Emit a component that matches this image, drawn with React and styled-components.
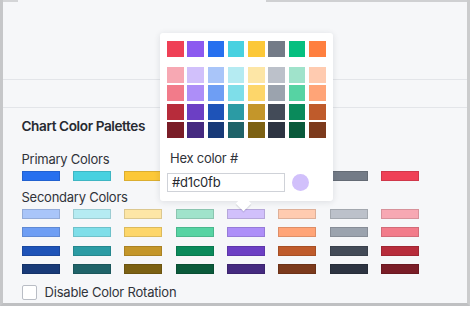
import React from 'react';
import styled, {createGlobalStyle} from 'styled-components';

const GlobalStyle = createGlobalStyle`
body {
	margin: 0;
	background: #fff;
	font-family: Inter, "Noto Sans", sans-serif;
	color: #2a2d34;
}
`;

const primary = ['#ef4056', '#8c5af0', '#2770ef', '#48d1e0', '#fcc838', '#737b87', '#06bf7f', '#ff7f3f'];

const shades = [
	['#f7a8b3', '#d1c0fb', '#a9c5f9', '#b5ebf2', '#fde6a6', '#bcc1ca', '#a0e3cb', '#ffcbb0'],
	['#f27b8a', '#ad8ef8', '#6e9ef4', '#7edee9', '#fdd66a', '#9ba3ae', '#56d3a3', '#ffa477'],
	['#b72c3b', '#6c3fc4', '#1e53b8', '#2b9ba4', '#c4962a', '#434b58', '#0a8a5b', '#bf5b2b'],
	['#7a1d27', '#452a80', '#183a78', '#1f6369', '#7c6113', '#2d3442', '#0a5a3b', '#7c3a1c'],
];

// chart bars run in a different order than the picker
const barOrder = [2, 3, 4, 6, 1, 7, 5, 0];
const primaryBars = barOrder.map(i => primary[i]);
const secondaryBars = shades.map(row => barOrder.map(i => row[i]));

const Frame = styled.div`
position: relative;
width: 464px;
height: 303px;
display: flex;
flex-direction: column;
background:
	linear-gradient(to right, #d4d5d7 0 15px, transparent 15px 263px, #cfd0d2 263px) top / 100% 2px no-repeat,
	#f6f7f9;
border-left: 3px solid #c6c7c9;
border-right: 3px solid #cbcccd;
border-bottom: 3px solid #bfc0c2;
`;

const TopArea = styled.div`
height: 79px;
`;

const Band = styled.div`
height: 27px;
`;

const Divider = styled.div`
height: 1px;
background: #e3e5e9;
`;

const Content = styled.div`
padding-left: 18.5px;
display: flex;
flex-direction: column;
`;

const Heading = styled.div`
margin-top: 9px;
font-size: 13.6px;
line-height: 18px;
font-weight: 600;
letter-spacing: -0.4px;
color: #272a31;
`;

const Label = styled.div`
margin-top: ${({gap}) => gap}px;
font-size: 13px;
line-height: 16px;
letter-spacing: -0.25px;
color: #30333a;
`;

const BarGrid = styled.div`
margin-top: 4.3px;
display: grid;
grid-template-columns: repeat(8, 38px);
column-gap: 13.4px;
row-gap: 8.5px;
`;

const Bar = styled.div`
height: 10px;
background: ${({color}) => color};
box-shadow: inset 0 0 0 1px rgba(0, 0, 0, 0.13);
`;

const CheckRow = styled.label`
margin-top: 10.5px;
height: 15px;
display: flex;
align-items: center;
gap: 8px;
font-size: 13px;
line-height: 16px;
letter-spacing: -0.2px;
color: #30333a;
`;

const Box = styled.span`
width: 13px;
height: 13px;
border: 1px solid #b9bdc5;
border-radius: 2px;
background: #fff;
`;

const Popover = styled.div`
position: absolute;
left: 157px;
top: 33px;
width: 159px;
height: 153px;
padding: 7.5px 7px 7px;
background: #fff;
border-radius: 3px;
box-shadow: 0 1px 6px rgba(30, 40, 60, 0.12);
display: flex;
flex-direction: column;

&::after {
	content: '';
	position: absolute;
	left: 78px;
	bottom: -8px;
	width: 11px;
	height: 11px;
	background: #fff;
	transform: rotate(45deg);
	box-shadow: 1px 1px 1px rgba(30, 40, 60, 0.12);
}
`;

const Swatches = styled.div`
margin-top: ${({gap = 0}) => gap}px;
display: grid;
grid-template-columns: repeat(8, 16.5px);
column-gap: 3.8px;
row-gap: 2.3px;
`;

const Swatch = styled.div`
height: 16px;
background: ${({color}) => color};
`;

const HexLabel = styled.div`
margin-top: 11.7px;
margin-left: 3px;
font-size: 13px;
line-height: 16px;
letter-spacing: -0.25px;
color: #30333a;
`;

const HexRow = styled.div`
margin-top: 7.3px;
display: flex;
align-items: center;
gap: 7px;
`;

const HexInput = styled.div`
box-sizing: border-box;
width: 118px;
height: 19px;
padding-left: 4px;
border: 1px solid #cfd2d8;
font-size: 13px;
line-height: 17px;
letter-spacing: -0.2px;
color: #272a31;
`;

const Dot = styled.span`
width: 17px;
height: 17px;
border-radius: 50%;
background: ${({color}) => color};
`;

export default function App() {
	return <>
		<GlobalStyle />
		<Frame>
			<TopArea />
			<Divider />
			<Band />
			<Divider />
			<Content>
				<Heading>Chart Color Palettes</Heading>
				<Label gap={15.7}>Primary Colors</Label>
				<BarGrid>
					{primaryBars.map((c, i) => <Bar key={i} color={c} />)}
				</BarGrid>
				<Label gap={7.7}>Secondary Colors</Label>
				<BarGrid>
					{secondaryBars.flat().map((c, i) => <Bar key={i} color={c} />)}
				</BarGrid>
				<CheckRow><Box />Disable Color Rotation</CheckRow>
			</Content>
			<Popover>
				<Swatches>
					{primary.map(c => <Swatch key={c} color={c} />)}
				</Swatches>
				<Swatches gap={10.5}>
					{shades.flat().map(c => <Swatch key={c} color={c} />)}
				</Swatches>
				<HexLabel>Hex color #</HexLabel>
				<HexRow>
					<HexInput>#d1c0fb</HexInput>
					<Dot color='#d1c0fb' />
				</HexRow>
			</Popover>
		</Frame>
	</>;
}
